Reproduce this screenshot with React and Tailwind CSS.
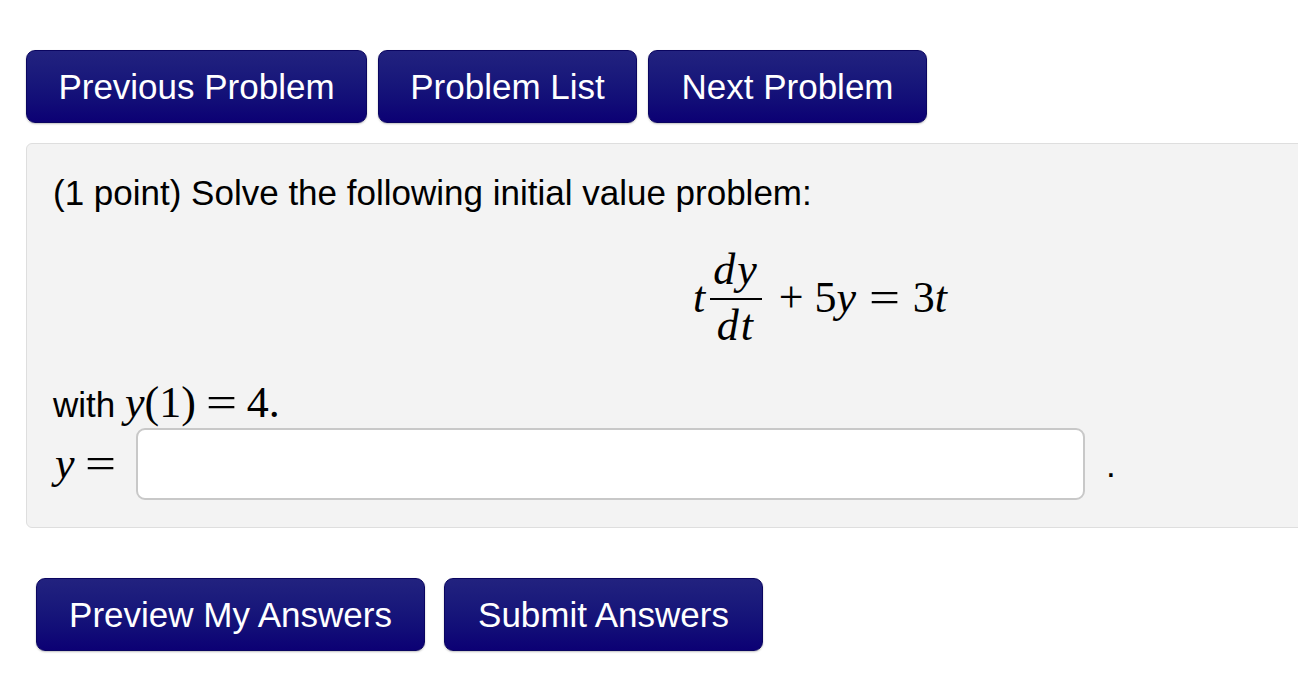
const btn =
  "h-[73px] rounded-[9px] border border-[#0a0560] bg-gradient-to-b from-[#22227f] to-[#0c0074] text-white text-[35px] leading-none shadow-[0_1px_2px_rgba(0,0,0,0.25)] font-['Liberation_Sans',Arial,sans-serif]";

const serif = "font-['Liberation_Serif','Times_New_Roman',serif]";

export default function App() {
  return (
    <div className="w-full h-screen overflow-hidden bg-white font-['Liberation_Sans',Arial,sans-serif] text-black">
      <div className="pt-[50px] pl-[26px]">
        <div className="flex gap-[11px]">
          <button className={`${btn} w-[341px]`}>Previous Problem</button>
          <button className={`${btn} w-[259px]`}>Problem List</button>
          <button className={`${btn} w-[279px]`}>Next Problem</button>
        </div>

        <div className="mt-[20px] w-[1588px] h-[385px] rounded-[6px] border border-[#dedede] bg-[#f3f3f3] pl-[26px] pr-[26px] pt-[24px]">
          <p className="text-[35px] leading-[50px]">(1 point) Solve the following initial value problem:</p>

          <div className={`flex justify-center items-center mt-[30px] text-[44px] ${serif}`}>
            <span className="italic">t</span>
            <span className="flex flex-col items-center mx-[5px]">
              <span className="italic leading-[44px] pb-[6px] px-[3px] tracking-[2px]">dy</span>
              <span className="h-[2px] w-full bg-black"></span>
              <span className="italic leading-[44px] pt-[4px] px-[3px] tracking-[2px]">dt</span>
            </span>
            <span className="ml-[12px] flex items-center">
              <span>+</span>
              <span className="ml-[11px]">5</span>
              <span className="italic">y</span>
              <span className="ml-[16px] scale-x-[1.25]">=</span>
              <span className="ml-[16px]">3</span>
              <span className="italic">t</span>
            </span>
          </div>

          <p className="mt-[30px] text-[35px] leading-[50px]">
            with <span className={`${serif} text-[44px]`}><span className="italic">y</span>(1) <span className="inline-block scale-x-[1.25] mx-[2px]">=</span> 4.</span>
          </p>

          <div className="flex items-center -mt-[2px]">
            <span className={`${serif} text-[44px] w-[83px] pl-[2px] leading-none`}>
              <span className="italic">y</span> <span className="inline-block scale-x-[1.25] ml-[2px]">=</span>
            </span>
            <div className="w-[949px] h-[72px] rounded-[9px] border-2 border-[#c8c8c8] bg-white"></div>
            <span className="ml-[21px] text-[35px] leading-none">.</span>
          </div>
        </div>

        <div className="flex gap-[19px] mt-[50px] ml-[10px]">
          <button className={`${btn} w-[389px]`}>Preview My Answers</button>
          <button className={`${btn} w-[319px]`}>Submit Answers</button>
        </div>
      </div>
    </div>
  );
}
